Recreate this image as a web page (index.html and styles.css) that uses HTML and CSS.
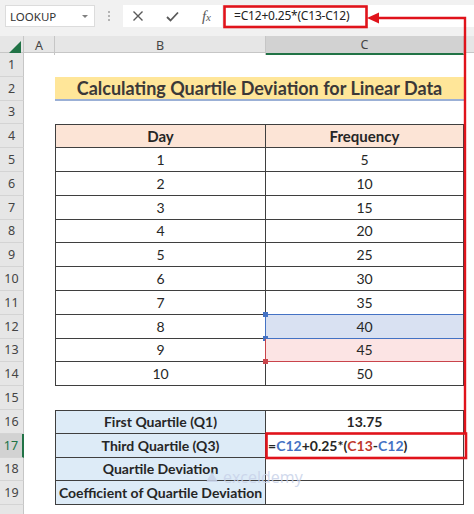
FILE: index.html
```html
<!DOCTYPE html>
<html lang="en">
<head>
    <meta charset="UTF-8">
    <meta name="viewport" content="width=device-width, initial-scale=1.0">
    <title>Quartile Deviation for Linear Data</title>
    <link rel="stylesheet" href="styles.css">
</head>
<body>

<div class="window">

    <!-- Name box + formula bar -->
    <div class="toolbar">
        <div class="namebox">
            <span>LOOKUP</span>
            <span class="drop"></span>
        </div>
        <div class="grip"><i></i><i></i><i></i></div>
        <div class="fx-buttons">
            <svg width="12" height="12" viewBox="0 0 12 12"><path d="M1.5 1.5 L10.5 10.5 M10.5 1.5 L1.5 10.5" stroke="#595959" stroke-width="1.4" fill="none"/></svg>
            <svg width="13" height="11" viewBox="0 0 13 11"><path d="M1 6 L4.5 9.5 L12 1.5" stroke="#595959" stroke-width="1.8" fill="none"/></svg>
            <span class="fx">f<small>x</small></span>
        </div>
        <div class="formula">=C12+0.25*(C13-C12)</div>
    </div>

    <!-- Worksheet -->
    <div class="sheet">
        <div class="row colhead">
            <div class="corner"><span class="tri"></span></div>
            <div class="ch">A</div>
            <div class="ch">B</div>
            <div class="ch active">C</div>
            <div class="ch last"></div>
        </div>

        <div class="row">
            <div class="rh">1</div><div></div><div></div><div></div><div></div>
        </div>
        <div class="row">
            <div class="rh">2</div><div></div>
            <div class="title">Calculating Quartile Deviation for Linear Data</div>
            <div></div>
        </div>
        <div class="row">
            <div class="rh">3</div><div></div><div></div><div></div><div></div>
        </div>
        <div class="row">
            <div class="rh">4</div><div></div>
            <div class="c t head left top">Day</div>
            <div class="c t head top">Frequency</div>
            <div></div>
        </div>
        <div class="row"><div class="rh">5</div><div></div><div class="c t left">1</div><div class="c t">5</div><div></div></div>
        <div class="row"><div class="rh">6</div><div></div><div class="c t left">2</div><div class="c t">10</div><div></div></div>
        <div class="row"><div class="rh">7</div><div></div><div class="c t left">3</div><div class="c t">15</div><div></div></div>
        <div class="row"><div class="rh">8</div><div></div><div class="c t left">4</div><div class="c t">20</div><div></div></div>
        <div class="row"><div class="rh">9</div><div></div><div class="c t left">5</div><div class="c t">25</div><div></div></div>
        <div class="row"><div class="rh">10</div><div></div><div class="c t left">6</div><div class="c t">30</div><div></div></div>
        <div class="row"><div class="rh">11</div><div></div><div class="c t left">7</div><div class="c t">35</div><div></div></div>
        <div class="row">
            <div class="rh">12</div><div></div>
            <div class="c t left">8</div>
            <div class="c t ref-blue">40<span class="handle tl"></span><span class="handle bl"></span></div>
            <div></div>
        </div>
        <div class="row">
            <div class="rh">13</div><div></div>
            <div class="c t left">9</div>
            <div class="c t ref-red">45<span class="handle bl"></span></div>
            <div></div>
        </div>
        <div class="row"><div class="rh">14</div><div></div><div class="c t left">10</div><div class="c t">50</div><div></div></div>
        <div class="row">
            <div class="rh">15</div><div></div><div></div><div></div><div></div>
        </div>
        <div class="row">
            <div class="rh">16</div><div></div>
            <div class="c t left top label">First Quartile (Q1)</div>
            <div class="c t top bold">13.75</div>
            <div></div>
        </div>
        <div class="row">
            <div class="rh active">17</div><div></div>
            <div class="c t left label">Third Quartile (Q3)</div>
            <div class="c t bold editing">=<span class="blue">C12</span>+0.25*(<span class="red">C13</span>-<span class="blue">C12</span>)</div>
            <div></div>
        </div>
        <div class="row">
            <div class="rh">18</div><div></div>
            <div class="c t left label">Quartile Deviation</div>
            <div class="c t"></div>
            <div></div>
        </div>
        <div class="row">
            <div class="rh">19</div><div></div>
            <div class="c t left label">Coefficient of Quartile Deviation</div>
            <div class="c t"></div>
            <div></div>
        </div>
        <div class="row">
            <div class="rh"></div><div></div><div></div><div></div><div></div>
        </div>
    </div>

    <div class="watermark">
        <svg width="16" height="14" viewBox="0 0 16 14"><path d="M2 12 L8 2 L14 12 Z" fill="#c9d3ea"/></svg>
        <span>exceldemy</span>
    </div>

    <!-- red call-out drawn over the sheet -->
    <svg class="callout" width="474" height="514" viewBox="0 0 474 514">
        <rect x="224.5" y="6.5" width="142" height="20.5" fill="none" stroke="#e0131b" stroke-width="2.6"/>
        <rect x="266.5" y="433.5" width="199.5" height="24.5" fill="none" stroke="#e0131b" stroke-width="2.6"/>
        <path d="M465 433 L465 18 L377 18" fill="none" stroke="#e0131b" stroke-width="2.4"/>
        <path d="M367 18 L379 12.5 L379 23.5 Z" fill="#e0131b"/>
    </svg>

</div>

</body>
</html>
```

FILE: styles.css
```css
* {
    box-sizing: border-box;
}

body {
    margin: 0;
    width: 474px;
    height: 514px;
    overflow: hidden;
    background-color: #fff;
    font-family: Lato, "Open Sans", sans-serif;
    color: #262626;
}

.window {
    position: relative;
}

/* ---------- toolbar ---------- */

.toolbar {
    height: 36px;
    background-color: #f1f1f1;
    display: flex;
    align-items: flex-start;
    padding-top: 5px;
}

.namebox {
    margin-left: 5px;
    width: 90px;
    height: 22px;
    background-color: #fff;
    border: 1px solid #dcdcdc;
    display: flex;
    align-items: center;
    justify-content: space-between;
    padding: 0 6px 0 4px;
    font-family: "Noto Sans", sans-serif;
    font-size: 11.5px;
    color: #333;
}

.drop {
    border-left: 3px solid transparent;
    border-right: 3px solid transparent;
    border-top: 3px solid #808080;
}

.grip {
    width: 28px;
    height: 22px;
    display: flex;
    flex-direction: column;
    align-items: center;
    justify-content: center;
    gap: 2px;
}

.grip i {
    width: 2px;
    height: 2px;
    background-color: #b4b4b4;
}

.fx-buttons {
    width: 99px;
    height: 22px;
    background-color: #fff;
    display: flex;
    align-items: center;
    justify-content: space-between;
    padding: 0 11px 0 9px;
}

.fx {
    font-family: "Liberation Serif", serif;
    font-style: italic;
    font-size: 15px;
    color: #595959;
}

.fx small {
    font-size: 11px;
}

.formula {
    flex: 1;
    height: 22px;
    margin-left: 1px;
    background-color: #fff;
    padding-left: 11px;
    line-height: 22px;
    font-family: "Noto Sans", sans-serif;
    font-size: 12px;
    letter-spacing: -0.2px;
    color: #222;
}

/* ---------- grid ---------- */

.row {
    display: grid;
    grid-template-columns: 24px 31px 211px 198px 10px;
    height: 23.8px;
}

.colhead {
    height: 17px;
    background-color: #e6e6e6;
    border-bottom: 1px solid #c6c6c6;
}

.corner {
    position: relative;
    border-right: 1px solid #c6c6c6;
}

.tri {
    position: absolute;
    right: 2px;
    bottom: 2px;
    width: 0;
    height: 0;
    border-left: 12px solid transparent;
    border-bottom: 12px solid #217346;
}

.ch {
    display: flex;
    align-items: center;
    justify-content: center;
    border-right: 1px solid #c6c6c6;
    font-family: "Noto Sans", sans-serif;
    font-size: 12.5px;
    color: #444;
}

.ch.active {
    background-color: #d2d2d2;
    border-bottom: 2px solid #217346;
}

.ch.last {
    border-right: none;
}

.rh {
    display: flex;
    align-items: center;
    justify-content: center;
    background-color: #e6e6e6;
    border-right: 1px solid #c6c6c6;
    border-bottom: 1px solid #d4d4d4;
    font-family: "Noto Sans", sans-serif;
    font-size: 12.5px;
    color: #444;
}

.rh.active {
    background-color: #d2d2d2;
    border-right: 2px solid #217346;
    color: #217346;
}

.title {
    grid-column: 3 / 5;
    display: flex;
    align-items: center;
    justify-content: center;
    background-color: #ffe699;
    border-bottom: 2px solid #9bb0d6;
    font-weight: bold;
    font-size: 18px;
    color: #3b3838;
}

/* ---------- bordered table cells ---------- */

.c {
    display: flex;
    align-items: center;
    justify-content: center;
    font-size: 14px;
}

.t {
    border-right: 1px solid #3f3f3f;
    border-bottom: 1px solid #3f3f3f;
}

.t.left {
    border-left: 1px solid #3f3f3f;
}

.t.top {
    border-top: 1px solid #3f3f3f;
}

.head {
    background-color: #fce4d6;
    font-weight: bold;
    font-size: 15px;
}

.label {
    background-color: #ddebf7;
    font-weight: bold;
}

.bold {
    font-weight: bold;
}

.editing {
    justify-content: flex-start;
    padding-left: 2px;
}

.blue {
    color: #4472c4;
}

.red {
    color: #c0392b;
}

/* range colouring while the formula is edited */

.ref-blue {
    position: relative;
    background-color: #d9e1f2;
    border-bottom-color: #4472c4;
    box-shadow: -1px -1px 0 #4472c4;
}

.ref-red {
    position: relative;
    background-color: #fce4e4;
    border-bottom-color: #c9444b;
    box-shadow: -1px 0 0 #c9444b;
}

.handle {
    position: absolute;
    left: -3px;
    width: 5px;
    height: 5px;
    background-color: #4472c4;
}

.handle.tl {
    top: -3px;
}

.handle.bl {
    bottom: -3px;
}

.ref-red .handle {
    background-color: #c9444b;
    z-index: 1;
}

/* ---------- overlays ---------- */

.watermark {
    position: absolute;
    left: 204px;
    top: 468px;
    display: flex;
    align-items: center;
    gap: 3px;
    line-height: 18px;
    font-family: "Open Sans", sans-serif;
    font-size: 16px;
    color: #c9d3ea;
    opacity: 0.85;
}

.callout {
    position: absolute;
    left: 0;
    top: 0;
    pointer-events: none;
}
```
